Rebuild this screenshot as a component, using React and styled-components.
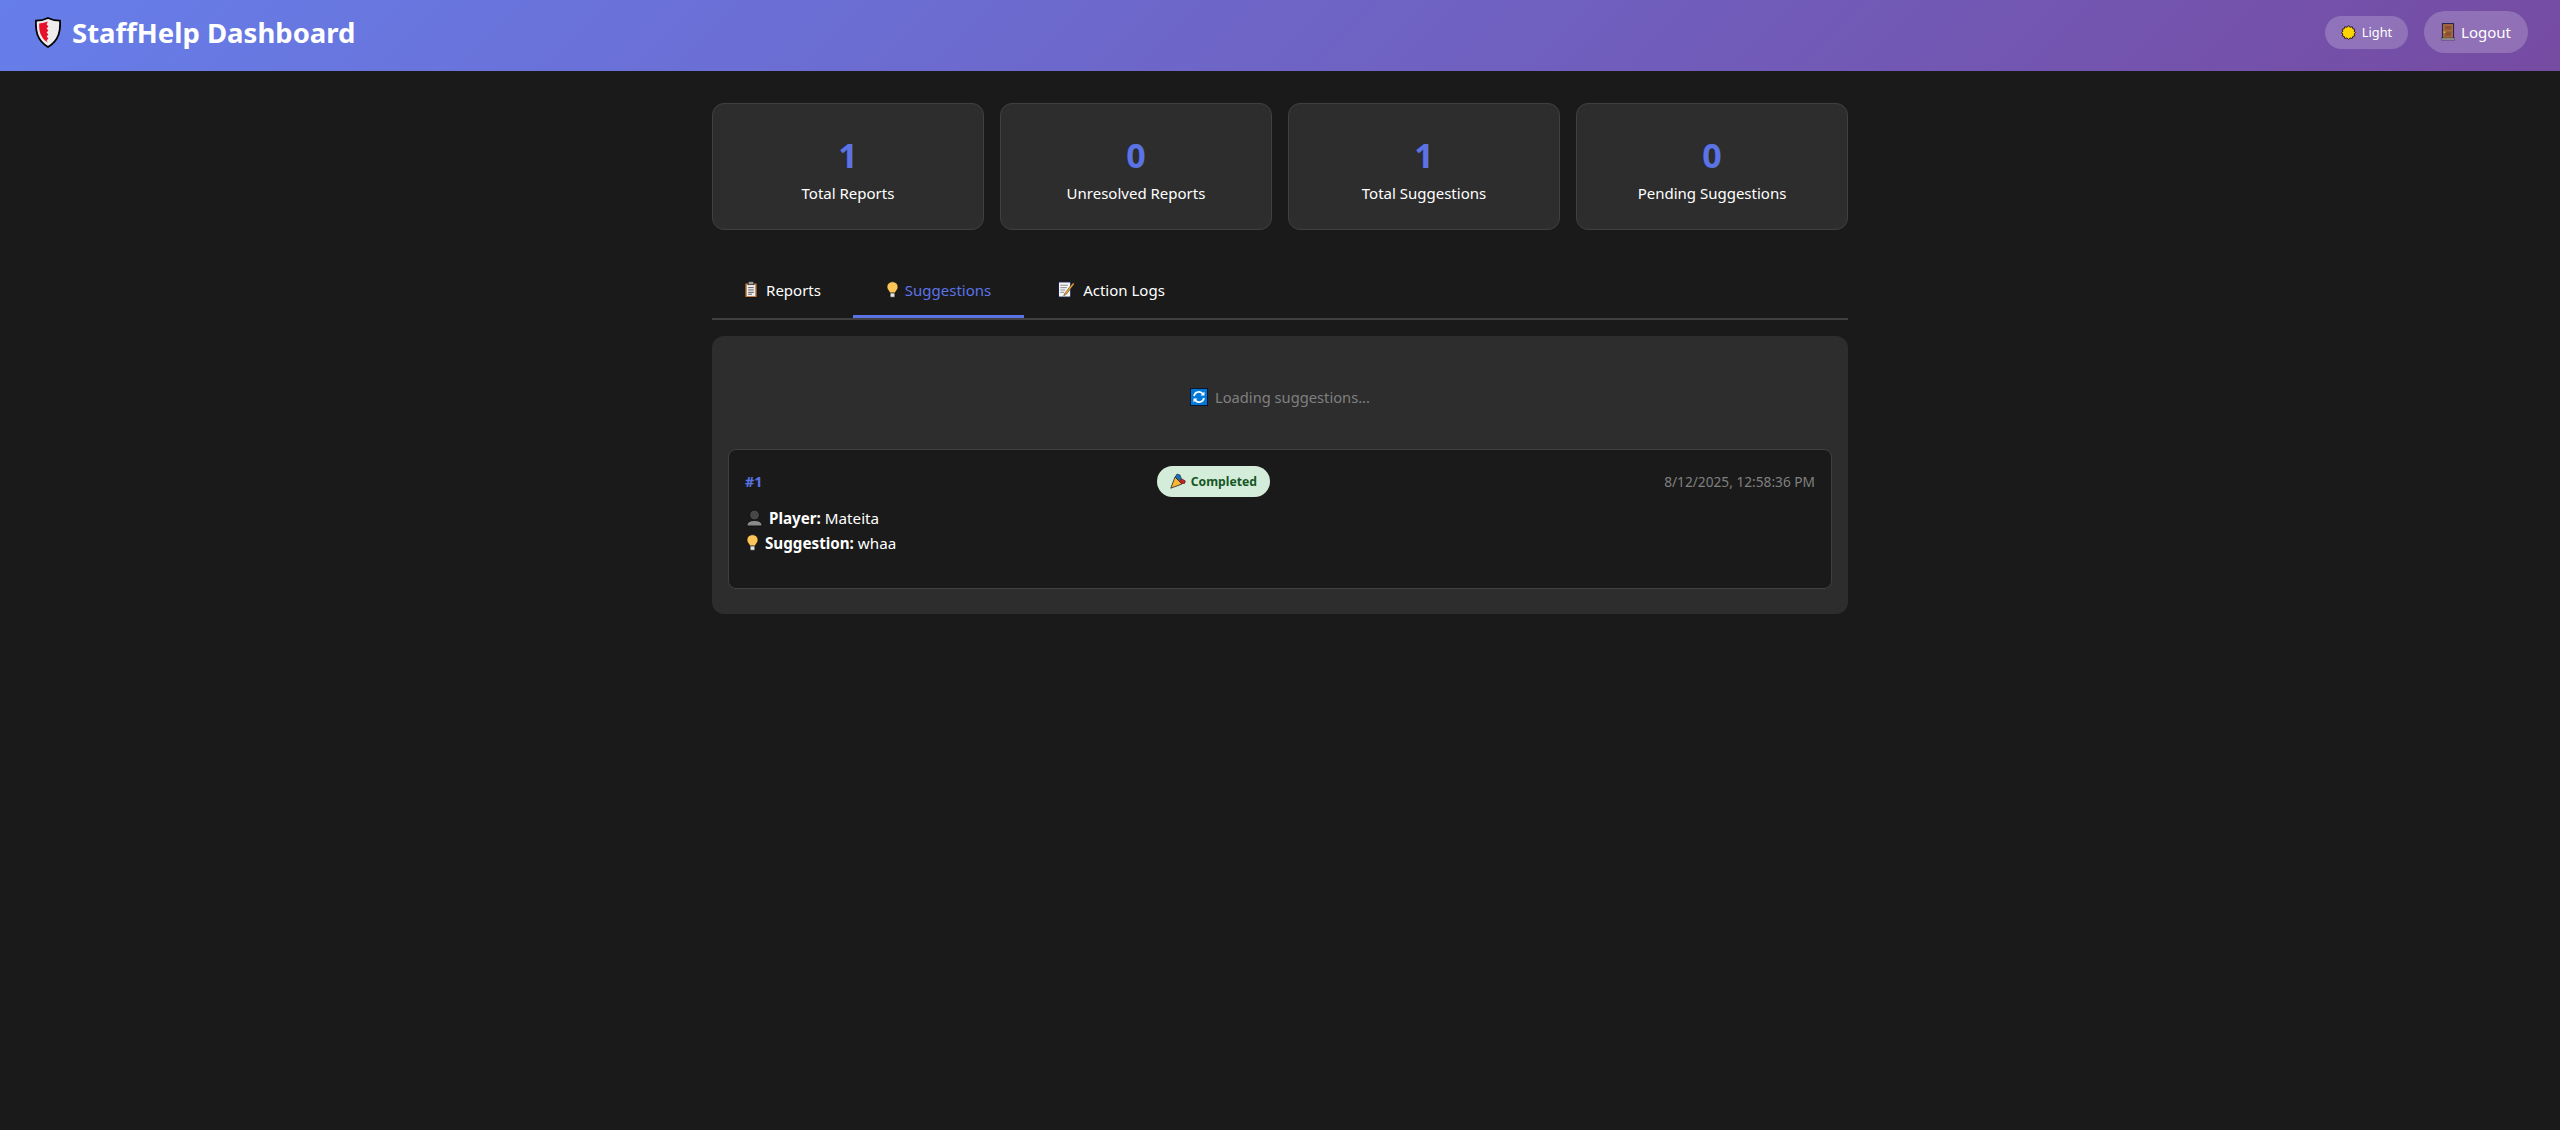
import React from 'react';
import styled, { createGlobalStyle } from 'styled-components';

const GlobalStyle = createGlobalStyle`
  html, body {
    margin: 0;
    padding: 0;
    background: #1a1a1a;
  }
  body {
    min-height: 1130px;
    font-family: "Noto Sans", "Open Sans", sans-serif;
    color: #fff;
  }
  * { box-sizing: border-box; }
`;

const ShieldIcon = () => (
  <svg width="26" height="31" viewBox="0 0 26 31" style={{ display: 'block' }}>
    <path d="M13 1 C16.5 2.8 20.5 3.6 25 3.6 C25.6 13 24.5 23 13 30 C1.5 23 .4 13 1 3.6 C5.5 3.6 9.5 2.8 13 1Z" fill="#ededed" stroke="#000" strokeWidth="1.8" />
    <path d="M12.8 4.6 C10 5.6 7.2 6.2 4.2 6.4 C3.9 13 5 20.5 12.8 25.6 L11.6 23.4 L13.4 21.4 L11.6 19.4 L13.4 17.4 L11.6 15.4 L13.4 13.4 L11.6 11.4 L13.4 9.4 L11.6 7.4Z" fill="#e8112d" />
  </svg>
);

const SunIcon = () => (
  <svg width="15" height="15" viewBox="0 0 16 16">
    <path d="M8 0.5 L9.5 2.5 L12 1.8 L12.6 4 L14.8 4.5 L14 6.8 L15.6 8 L14 9.6 L14.8 11.7 L12.6 12.2 L12 14.4 L9.6 13.8 L8 15.5 L6.4 13.8 L4 14.4 L3.4 12.2 L1.2 11.7 L2 9.6 L0.4 8 L2 6.8 L1.2 4.5 L3.4 4 L4 1.8 L6.5 2.5Z" fill="#ffd400" stroke="#221a22" strokeWidth="1" />
  </svg>
);

const DoorIcon = () => (
  <svg width="14" height="18" viewBox="0 0 15 19">
    <rect x="1.5" y="0.5" width="12" height="16" fill="#a9673f" stroke="#11204a" />
    <rect x="4" y="3" width="7" height="4" fill="#8a5232" />
    <rect x="4" y="9" width="7" height="5" fill="#8a5232" />
    <rect x="2.8" y="9" width="2" height="1.5" fill="#e6b93a" />
    <rect x="0" y="16" width="15" height="2" fill="#cfcfcf" stroke="#111" strokeWidth="0.6" />
  </svg>
);

const ClipboardIcon = () => (
  <svg width="14" height="17" viewBox="0 0 14 18">
    <rect x="0.5" y="2" width="13" height="15.5" rx="1" fill="#b5763f" stroke="#111" />
    <rect x="2.5" y="4" width="9" height="12" fill="#eeeeee" />
    <rect x="4" y="0.5" width="6" height="3.5" fill="#9a9a9a" stroke="#111" strokeWidth="0.6" />
    <path d="M4 7h6M4 9.5h6M4 12h6M4 14h4" stroke="#555" strokeWidth="1" />
  </svg>
);

const BulbIcon = () => (
  <svg width="13" height="17" viewBox="0 0 14 19">
    <path d="M7 0.8 C10.8 0.8 13.2 3.5 13.2 6.7 C13.2 9.5 10.6 11 10 13.5 L4 13.5 C3.4 11 0.8 9.5 0.8 6.7 C0.8 3.5 3.2 0.8 7 0.8Z" fill="#ffc558" stroke="#111" strokeWidth="0.8" />
    <rect x="4.4" y="13.5" width="5.2" height="4.6" rx="0.8" fill="#e4e4e4" stroke="#111" strokeWidth="0.6" />
  </svg>
);

const MemoIcon = () => (
  <svg width="18" height="17" viewBox="0 0 18 18">
    <rect x="1" y="1" width="13" height="16" fill="#f4f4f4" stroke="#10183a" />
    <path d="M3 4.5h8M3 7h7M3 9.5h5M3 12h4" stroke="#8a8a8a" strokeWidth="1" />
    <path d="M16.5 1.8 L8 12.6 L6.5 15.6 L9.4 14 L17.8 3.2Z" fill="#f0a830" stroke="#222" strokeWidth="0.5" />
  </svg>
);

const RefreshIcon = () => (
  <svg width="18" height="18" viewBox="0 0 18 18">
    <rect x="0.5" y="0.5" width="17" height="17" fill="#0078d7" stroke="#06142e" />
    <path d="M4 8 A5 5 0 0 1 13 6 M14 10 A5 5 0 0 1 5 12" fill="none" stroke="#fff" strokeWidth="1.7" />
    <path d="M14.5 3.5 V7.5 H10.5Z M3.5 14.5 V10.5 H7.5Z" fill="#fff" />
  </svg>
);

const PersonIcon = () => (
  <svg width="17" height="18" viewBox="0 0 17 18">
    <circle cx="8.5" cy="6" r="5" fill="#474747" stroke="#111" />
    <path d="M1 17 C1 13 4 11.5 8.5 11.5 C13 11.5 16 13 16 17Z" fill="#8a8a8a" stroke="#111" />
  </svg>
);

const PartyIcon = () => (
  <svg width="16" height="16" viewBox="0 0 16 16">
    <path d="M0.8 15.2 L5 4 L12 11Z" fill="#f7b733" stroke="#222" strokeWidth="0.8" />
    <path d="M5 4 L7 1 L10 2 L11.5 6 L8.5 7Z" fill="#1f6fb0" stroke="#102040" strokeWidth="0.6" />
    <path d="M9 8 L12 6 L15.4 8 L14.5 10.5 L11.5 10.5Z" fill="#c5242a" stroke="#301010" strokeWidth="0.6" />
  </svg>
);

const TopBar = styled.header`
  height: 71px;
  padding: 0 32px 7px 35px;
  display: flex;
  align-items: center;
  justify-content: space-between;
  background: linear-gradient(135deg, #667eea 0%, #764ba2 100%);
`;

const Brand = styled.h1`
  margin: 0;
  display: flex;
  align-items: center;
  gap: 11px;
  font-size: 27.5px;
  font-weight: 700;
  color: #fff;
`;

const Controls = styled.div`
  display: flex;
  align-items: center;
  gap: 16px;
`;

const PillButton = styled.button`
  display: flex;
  align-items: center;
  justify-content: center;
  gap: 6px;
  border: 0;
  border-radius: 25px;
  background: rgba(255, 255, 255, 0.2);
  color: #fff;
  font-family: inherit;
  font-size: ${p => (p.$large ? '15px' : '12.8px')};
  width: ${p => (p.$large ? '104px' : '83px')};
  height: ${p => (p.$large ? '42px' : '33px')};
  padding: 0;
`;

const Main = styled.main`
  width: 1136px;
  margin: 0 auto;
  padding-top: 32px;
`;

const StatsGrid = styled.section`
  display: grid;
  grid-template-columns: repeat(4, 1fr);
  gap: 16px;
`;

const StatCard = styled.div`
  height: 127px;
  padding-top: 6px;
  display: flex;
  flex-direction: column;
  align-items: center;
  justify-content: center;
  background: #2d2d2d;
  border: 1px solid #404040;
  border-radius: 12px;
`;

const StatValue = styled.div`
  font-size: 34px;
  line-height: 40px;
  font-weight: 700;
  color: #5c73e6;
  margin-bottom: 7px;
`;

const StatLabel = styled.div`
  font-size: 15px;
  line-height: 22px;
  color: #fff;
`;

const TabBar = styled.nav`
  display: flex;
  margin-top: 32px;
  height: 58px;
  border-bottom: 2px solid #404040;
`;

const Tab = styled.button`
  display: flex;
  align-items: center;
  justify-content: center;
  gap: ${p => (p.$active ? '6px' : '8px')};
  width: ${p => p.$width}px;
  height: 56px;
  padding: 2px 0 0;
  background: none;
  border: 0;
  border-bottom: 3px solid ${p => (p.$active ? '#5c73e6' : 'transparent')};
  color: ${p => (p.$active ? '#5c73e6' : '#fff')};
  font-family: inherit;
  font-size: 15px;
`;

const Panel = styled.section`
  margin-top: 16px;
  padding: 16px 16px 25px;
  background: #2d2d2d;
  border-radius: 12px;
`;

const LoadingRow = styled.div`
  height: 97px;
  padding-bottom: 7px;
  display: flex;
  align-items: center;
  justify-content: center;
  gap: 7px;
  font-size: 14.7px;
  color: #808080;
`;

const SuggestionCard = styled.article`
  height: 140px;
  padding: 15px 16px 16px;
  background: #1a1a1a;
  border: 1px solid #404040;
  border-radius: 8px;
`;

const CardHead = styled.div`
  display: flex;
  align-items: center;
  justify-content: space-between;
  height: 32px;
  margin-bottom: 8px;
`;

const CardId = styled.span`
  font-size: 14.4px;
  font-weight: 700;
  color: #5c73e6;
`;

const StatusBadge = styled.span`
  display: flex;
  align-items: center;
  justify-content: center;
  gap: 5px;
  width: 113px;
  height: 31px;
  border-radius: 20px;
  background: #d4edda;
  color: #155724;
  font-size: 12.2px;
  font-weight: 700;
`;

const Timestamp = styled.span`
  font-size: 13.7px;
  color: #808080;
`;

const InfoLine = styled.div`
  display: flex;
  align-items: center;
  gap: 6px;
  height: 25px;
  padding-left: 1px;
  font-size: 15.2px;
  color: #fff;

  b { font-weight: 700; }
`;

const stats = [
  { value: 1, label: 'Total Reports' },
  { value: 0, label: 'Unresolved Reports' },
  { value: 1, label: 'Total Suggestions' },
  { value: 0, label: 'Pending Suggestions' },
];

export default function App() {
  return (
    <>
      <GlobalStyle />
      <TopBar>
        <Brand><ShieldIcon />StaffHelp Dashboard</Brand>
        <Controls>
          <PillButton><SunIcon />Light</PillButton>
          <PillButton $large><DoorIcon />Logout</PillButton>
        </Controls>
      </TopBar>
      <Main>
        <StatsGrid>
          {stats.map(s => (
            <StatCard key={s.label}>
              <StatValue>{s.value}</StatValue>
              <StatLabel>{s.label}</StatLabel>
            </StatCard>
          ))}
        </StatsGrid>
        <TabBar>
          <Tab $width={141}><ClipboardIcon />Reports</Tab>
          <Tab $width={171} $active><BulbIcon />Suggestions</Tab>
          <Tab $width={174}><MemoIcon />Action Logs</Tab>
        </TabBar>
        <Panel>
          <LoadingRow><RefreshIcon />Loading suggestions...</LoadingRow>
          <SuggestionCard>
            <CardHead>
              <CardId>#1</CardId>
              <StatusBadge><PartyIcon />Completed</StatusBadge>
              <Timestamp>8/12/2025, 12:58:36 PM</Timestamp>
            </CardHead>
            <InfoLine><PersonIcon /><span><b>Player:</b> Mateita</span></InfoLine>
            <InfoLine><BulbIcon /><span><b>Suggestion:</b> whaa</span></InfoLine>
          </SuggestionCard>
        </Panel>
      </Main>
    </>
  );
}
